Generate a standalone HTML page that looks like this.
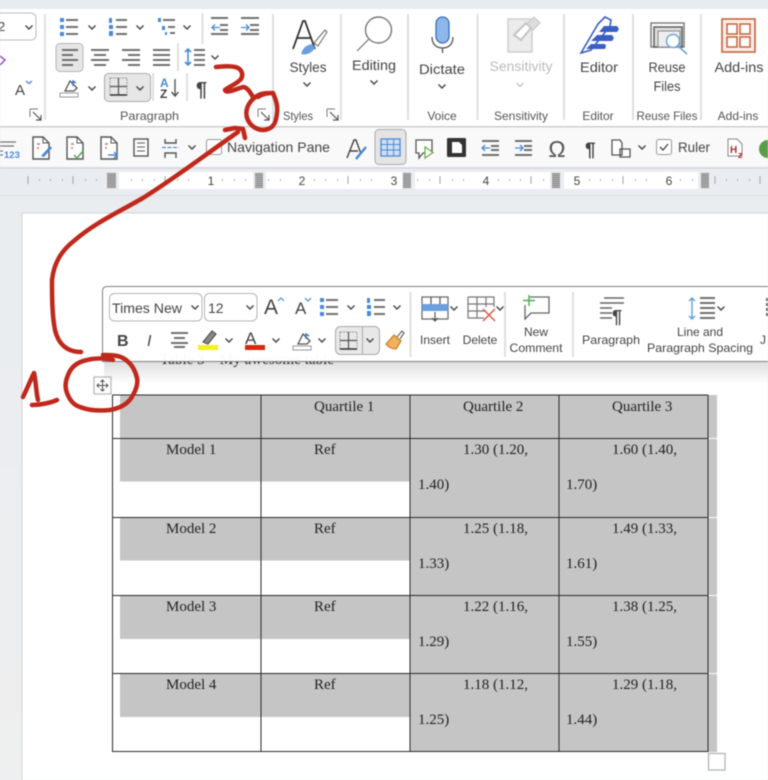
<!DOCTYPE html>
<html><head><meta charset="utf-8"><style>
html,body{margin:0;padding:0;background:#e8ecf0;width:768px;height:780px;overflow:hidden}
svg{display:block;filter:blur(.4px)}
text{font-family:"Liberation Sans",sans-serif;fill:#444}
.t{font-family:"Liberation Serif",serif;font-size:15px;fill:#222}
.g{font-size:12px;fill:#555}
.m{font-size:14px;text-anchor:middle;fill:#444}
.f{font-size:12px;text-anchor:middle;fill:#444}
.l{stroke:#707070;stroke-width:2;fill:none}
.b{fill:#4a8ad4}
.s{stroke:#e0e0e0;stroke-width:2}
.r{fill:none;stroke:#c0281c;stroke-width:4.500;stroke-linecap:round;stroke-linejoin:round}
</style></head><body>
<svg width="768" height="780" viewBox="0 0 768 780" xmlns="http://www.w3.org/2000/svg">
<defs>
<path id="ch" d="M-3.500-1.500 0 2 3.500-1.500" fill="none" stroke="#444" stroke-width="1.400"/>
<g id="launch"><path d="M-6-6H2M-6-6V2" stroke="#777" fill="none" stroke-width="1"/><path d="M-3-3 5 5M5 0V5H0" stroke="#555" fill="none" stroke-width="1.200"/></g>
<g id="bul"><rect x="0" y="0" width="4" height="4" class="b"/><rect x="0" y="7" width="4" height="4" class="b"/><rect x="0" y="14" width="4" height="4" class="b"/><path d="M6 2H18M6 9H18M6 16H18" class="l"/></g>
<g id="num"><rect x="0" y="0" width="3" height="5" class="b"/><rect x="0" y="7" width="4" height="4" class="b"/><rect x="0" y="13" width="4" height="5" class="b"/><path d="M7 2H18M7 9H18M7 16H18" class="l"/></g>
<g id="bord"><rect x="0" y="0" width="17" height="17" fill="none" stroke="#999" stroke-width="1" stroke-dasharray="2 1"/><path d="M8.500 0V17M0 8.500H17" stroke="#555" stroke-width="1.200"/><path d="M0 17H17" stroke="#333" stroke-width="1.400"/></g>
<g id="shade"><path d="M5 13 10 3l7 7-3 3H5z" fill="#fff" stroke="#555" stroke-width="1.300"/><path d="M13 8V3l3 2" stroke="#3a70c0" fill="none" stroke-width="1.400"/><rect x="0" y="15" width="18" height="4" fill="#fff" stroke="#999"/></g>
<g id="doc"><path d="M0 0H10L16 6V22H0z" fill="#fff" stroke="#555" stroke-width="1.400"/><path d="M10 0V6H16" fill="none" stroke="#555"/><path d="M4 7H7M4 11H6" stroke="#e06a6a" stroke-width="1.500"/></g>
<pattern id="hat" width="2" height="2" patternUnits="userSpaceOnUse"><rect width="2" height="2" fill="#8f8f8f"/><rect width="2" height="1" fill="#b0b0b0"/></pattern>
</defs>

<linearGradient id="bg" x1="0" y1="0" x2="0" y2="1"><stop offset="0" stop-color="#e7ecf0"/><stop offset="1" stop-color="#efefef"/></linearGradient>
<rect width="768" height="780" fill="url(#bg)"/>
<rect x="0" y="9" width="768" height="117" fill="#fff"/>
<rect x="0" y="126" width="768" height="1.500" fill="#cfcfcf"/>
<rect x="0" y="127.500" width="768" height="40" fill="#f9f9f9"/>
<rect x="0" y="167" width="768" height="2" fill="#d8dbde"/>
<rect x="0" y="169" width="768" height="26" fill="#e9edf1"/>
<rect x="0" y="195" width="768" height="1" fill="#dde0e3"/>

<path d="M0 13H30Q36 13 36 18V35Q36 40 30 40H0" fill="#fff" stroke="#bbb"/>
<text x="-2" y="31" style="font-size:13px">2</text>
<use href="#ch" x="29" y="27"/>
<path d="M0 56 5 60 0 65" fill="none" stroke="#9a4fc4" stroke-width="1.500"/>
<text x="15" y="95" style="font-size:15px">A</text><path d="M26 81l3 2.500 3-2.500" fill="none" stroke="#4a8ad4" stroke-width="1.300"/>
<use href="#launch" x="36" y="115"/>
<path d="M45 14V120M273 14V120M341 14V120M408 14V120M477.500 14V120M564 14V120M633 14V120M701 14V120" class="s"/>

<use href="#bul" x="60" y="18"/><use href="#ch" x="92" y="27"/>
<use href="#num" x="109" y="18"/><use href="#ch" x="140" y="27"/>
<rect x="158" y="18" width="3" height="4" class="b"/><rect x="162" y="26" width="3" height="4" class="b"/><rect x="165" y="32" width="2" height="3" class="b"/><path d="M163 20H175M168 27H175M170 33H175" class="l"/><use href="#ch" x="187" y="27"/>
<path d="M202.500 13V44" class="s"/>
<path d="M211 18H228M220 25H228M220 30H228M211 34H228" class="l"/><path d="M220 27.500H212M215 24.500 212 27.500 215 30.500" stroke="#4a8ad4" fill="none" stroke-width="1.300"/>
<path d="M241 18H259M250 25H259M250 30H259M241 34H259" class="l"/><path d="M241 27.500H249M246 24.500 249 27.500 246 30.500" stroke="#4a8ad4" fill="none" stroke-width="1.300"/>
<rect x="56" y="43.500" width="27" height="28" rx="4" fill="#e6e6e6" stroke="#b5b5b5"/>
<path d="M62 50H78M62 55H73M62 60H78M62 65H73" class="l"/>
<path d="M91 50H109M94 55H106M91 60H109M94 65H106" class="l"/>
<path d="M122 50H140M128 55H140M122 60H140M128 65H140" class="l"/>
<path d="M153 50H170M153 55H170M153 60H170M153 65H170" class="l"/>
<path d="M178 43V71" class="s"/>
<path d="M188 49V64M185 52l3-3 3 3M185 62l3 3 3-3" stroke="#4a8ad4" fill="none" stroke-width="1.600"/><path d="M194 50H205M194 55H205M194 60H205M194 65H205" class="l"/>
<use href="#ch" x="215" y="57"/>
<use href="#shade" x="60" y="78"/><use href="#ch" x="92" y="88"/>
<rect x="104.500" y="73.500" width="46" height="28" rx="4" fill="#e6e6e6" stroke="#aaa"/>
<use href="#bord" x="110" y="78"/><use href="#ch" x="140" y="88"/>
<path d="M153 73V101M187 73V101" class="s"/>
<text x="160" y="87" style="font-size:12px;fill:#4a8ad4;font-weight:bold">A</text><text x="160" y="98" style="font-size:12px;font-weight:bold">Z</text>
<path d="M175 79V96M171.500 92l3.500 4 3.500-4" stroke="#555" fill="none" stroke-width="1.400"/>
<text x="196" y="96" style="font-size:20px;font-weight:bold;fill:#444">¶</text>
<text x="120" y="120" class="g" textLength="59" lengthAdjust="spacingAndGlyphs">Paragraph</text>
<use href="#launch" x="264" y="115"/>
<text x="283" y="120" class="g" textLength="30" lengthAdjust="spacingAndGlyphs">Styles</text>
<use href="#launch" x="333" y="115"/>

<path d="M293 49 303 21h2l10 28M297 38h14" fill="none" stroke="#333" stroke-width="1.800"/>
<path d="M301 54c2-7 6-9 11-10l3 3c-1 4-7 9-14 7z" fill="#6a9fe0"/><path d="M314 43 325 30l2 2-9 14z" fill="#fff" stroke="#666"/>
<text x="308" y="72" class="m" textLength="37" lengthAdjust="spacingAndGlyphs">Styles</text><use href="#ch" x="307" y="84"/>
<circle cx="378.500" cy="30" r="13" fill="#fff" stroke="#777" stroke-width="1.400"/><path d="M369 39 357 51" stroke="#888" stroke-width="1.300"/>
<text x="374" y="70" class="m" textLength="44" lengthAdjust="spacingAndGlyphs">Editing</text><use href="#ch" x="374" y="82"/>
<rect x="436" y="17" width="13" height="26" rx="6.500" fill="#8db7e8" stroke="#3a70c0" stroke-width="1.300"/>
<path d="M432 37c0 8 5 11 10.500 11s10.500-3 10.500-11M442.500 48V53" fill="none" stroke="#555" stroke-width="1.300"/>
<text x="442" y="74" class="m" textLength="46" lengthAdjust="spacingAndGlyphs">Dictate</text><use href="#ch" x="442" y="86"/>
<rect x="508" y="19" width="24" height="33" fill="#ececec" stroke="#cfcfcf" stroke-width="1.500"/>
<path d="M514 35 526 23l5 5-10 12z" fill="#fff" stroke="#c4c4c4" stroke-width="2"/><path d="M527 24l7-7 6 6-7 7z" fill="#ddd" stroke="#c4c4c4"/>
<text x="521" y="71" class="m" style="fill:#bbb" textLength="63" lengthAdjust="spacingAndGlyphs">Sensitivity</text>
<path d="M516.500 83 520 86.500 523.500 83" fill="none" stroke="#bbb" stroke-width="1.200"/>
<path d="M581 53 598 24l7-7 6 3-1 6-19 24z" fill="#fff" stroke="#3a5fc4" stroke-width="1.600"/>
<path d="M604 26h13l2 3-2 3h-18zM597 35h15l2 3-2 3h-21zM591 44h14l1 2-1 3h-19z" fill="#3a5fc4"/>
<text x="599" y="72" class="m" textLength="38" lengthAdjust="spacingAndGlyphs">Editor</text>
<rect x="651" y="23" width="33" height="24" fill="#fff" stroke="#777" stroke-width="1.400"/><rect x="654" y="27" width="28" height="20" fill="#ddd" stroke="#555" stroke-width="1.400"/><rect x="658" y="31" width="22" height="16" fill="#eee" stroke="#888"/>
<circle cx="673" cy="41" r="6.500" fill="#fff" stroke="#6aa5dc" stroke-width="1.500"/><path d="M678 46 687 54" stroke="#6aa5dc" stroke-width="1.600"/>
<text x="667" y="72" class="m" textLength="37" lengthAdjust="spacingAndGlyphs">Reuse</text>
<text x="667" y="91" class="m" textLength="27" lengthAdjust="spacingAndGlyphs">Files</text>
<rect x="722" y="19" width="33" height="33" fill="#fbeee8" stroke="#c8623a" stroke-width="1.600"/>
<rect x="727" y="24" width="10" height="10" fill="#fff" stroke="#c8623a" stroke-width="1.500"/><rect x="740" y="24" width="10" height="10" fill="#fff" stroke="#c8623a" stroke-width="1.500"/><rect x="727" y="37" width="10" height="10" fill="#fff" stroke="#c8623a" stroke-width="1.500"/><rect x="740" y="37" width="10" height="10" fill="#fff" stroke="#c8623a" stroke-width="1.500"/>
<text x="739" y="72" class="m" textLength="49" lengthAdjust="spacingAndGlyphs">Add-ins</text>
<text x="442" y="120" class="g" text-anchor="middle">Voice</text>
<text x="521" y="120" class="g" text-anchor="middle" textLength="54" lengthAdjust="spacingAndGlyphs">Sensitivity</text>
<text x="598" y="120" class="g" text-anchor="middle">Editor</text>
<text x="667" y="120" class="g" text-anchor="middle" textLength="61" lengthAdjust="spacingAndGlyphs">Reuse Files</text>
<text x="738" y="120" class="g" text-anchor="middle">Add-ins</text>

<path d="M0 142H16M0 146H14M0 151H3M0 155H3" stroke="#777" stroke-width="1.200"/>
<text x="4" y="158" style="font-size:9.500px;font-weight:bold;fill:#4a8ad4">123</text>
<use href="#doc" x="33" y="137"/><path d="M41 156 50 146l2 2-8 9z" fill="#4a8ad4"/>
<use href="#doc" x="67" y="137"/><path d="M74 155l3 3 6-7" fill="none" stroke="#5aa85a" stroke-width="1.500"/>
<use href="#doc" x="101" y="137"/><path d="M108 155H117M114 152l3 3-3 3" fill="none" stroke="#4a8ad4" stroke-width="1.400"/>
<rect x="134" y="139" width="14" height="17" fill="#fff" stroke="#555" stroke-width="1.400"/><path d="M137 143H145M137 147H145M137 151H145" stroke="#777" stroke-width="1.200"/>
<path d="M162 147.500H179" stroke="#4a8ad4" stroke-width="1.300" stroke-dasharray="4 1.500"/><path d="M165 139V143H176V139M165 158V153H176V158" fill="none" stroke="#555" stroke-width="1.400"/>
<use href="#ch" x="192" y="147"/>
<rect x="206.500" y="139.500" width="15" height="15" rx="2" fill="#fff" stroke="#999"/>
<text x="227" y="152" style="font-size:14px" textLength="103" lengthAdjust="spacingAndGlyphs">Navigation Pane</text>
<path d="M347 158 354 140h2l5 14M350 151h8" fill="none" stroke="#444" stroke-width="1.400"/><path d="M356 159 366 147" stroke="#4a8ad4" stroke-width="2.500"/>
<rect x="375" y="129.500" width="31" height="35" rx="4" fill="#e4e4e4" stroke="#aaa"/>
<rect x="381" y="139" width="19" height="17" fill="#cfe0f5" stroke="#4a8ad4" stroke-width="1.300"/><path d="M387.300 139V156M393.600 139V156M381 144.500H400M381 150H400" stroke="#4a8ad4" stroke-width="1"/>
<path d="M416 140H432V153H423L419 158V153H416z" fill="#fff" stroke="#555" stroke-width="1.300"/><path d="M425 147V158L433 152.500z" fill="#fff" stroke="#6ab04a" stroke-width="1.300"/>
<rect x="447" y="138" width="19" height="19" rx="1" fill="#333"/><path d="M452 142H459L462 145V153H452z" fill="#fff"/>
<path d="M482 141H499M491 146H499M491 150H499M482 155H499" class="l"/><path d="M490 148H482M485 145 482 148 485 151" stroke="#4a8ad4" fill="none" stroke-width="1.300"/>
<path d="M515 141H532M524 146H532M524 150H532M515 155H532" class="l"/><path d="M515 148H523M520 145 523 148 520 151" stroke="#4a8ad4" fill="none" stroke-width="1.300"/>
<text x="557" y="157" style="font-size:23px;text-anchor:middle;fill:#555">Ω</text>
<text x="585" y="156" style="font-size:19px;font-weight:bold">¶</text>
<path d="M612 140H620L622 143V155H612zM620 149H630V157H620z" fill="#fff" stroke="#555" stroke-width="1.300"/>
<use href="#ch" x="642" y="147"/>
<rect x="656.500" y="139.500" width="15" height="15" rx="2" fill="#fff" stroke="#999"/><path d="M660 147l3 3 5-6" fill="none" stroke="#444" stroke-width="1.300"/>
<text x="678" y="152" style="font-size:14px" textLength="32" lengthAdjust="spacingAndGlyphs">Ruler</text>
<path d="M728 139H737L742 144V156H728z" fill="#fff" stroke="#888"/><text x="730" y="153" style="font-size:10px;fill:#b03030;font-weight:bold">H</text><text x="738" y="158" style="font-size:9px;fill:#b03030;font-weight:bold">z</text>
<circle cx="768" cy="149" r="9" fill="#5d9a4a"/>

<rect x="119" y="172" width="134" height="17" fill="#fff"/><rect x="266" y="172" width="136" height="17" fill="#fff"/><rect x="415" y="172" width="135" height="17" fill="#fff"/><rect x="564" y="172" width="134" height="17" fill="#fff"/>
<g fill="url(#hat)"><rect x="107" y="173" width="9" height="15"/><rect x="255" y="173" width="8" height="15"/><rect x="403" y="173" width="8" height="15"/><rect x="552" y="173" width="8" height="15"/><rect x="701" y="173" width="8" height="15"/></g>
<path d="M28 176V184M73 176V184M165 176V184M256 176V184M348 176V184M440 176V184M531 176V184M623 176V184M715 176V184M760 176V184" stroke="#aaa" stroke-width="1.100"/>
<path d="M39 180H40M50 180H51M62 180H63M85 180H86M96 180H97M131 180H132M142 180H143M154 180H155M177 180H178M188 180H189M222 180H223M234 180H235M245 180H246M268 180H269M280 180H281M314 180H315M325 180H326M337 180H338M360 180H361M371 180H372M417 180H418M429 180H430M452 180H453M463 180H464M498 180H499M509 180H510M520 180H521M543 180H544M589 180H590M600 180H601M612 180H613M635 180H636M646 180H647M680 180H681M692 180H693M726 180H727M737 180H738M749 180H750" stroke="#999" stroke-width="1.400"/>
<g style="font-size:12px" text-anchor="middle"><text x="211" y="185">1</text><text x="302" y="185">2</text><text x="394" y="185">3</text><text x="486" y="185">4</text><text x="577" y="185">5</text><text x="669" y="185">6</text></g>

<rect x="22" y="213" width="760" height="580" fill="#fff" stroke="#cfd2d4"/>

<g fill="#c5c5c5">
<rect x="120" y="395" width="290" height="43"/>
<rect x="120" y="438" width="290" height="43.500"/>
<rect x="120" y="517" width="290" height="43.500"/>
<rect x="120" y="596" width="290" height="43"/>
<rect x="120" y="674" width="290" height="43"/>
<rect x="410" y="395" width="307" height="357"/>
</g>
<path d="M112.500 395H708M112 438.500H708M112 517.500H708M112 595.500H708M112 673.500H708M112 751.500H708M112.500 395V752M261 395V752M410 395V752M559 395V752M708 395V752" stroke="#2a2a2a" stroke-width="1" fill="none"/>
<path d="M708.500 438.500H717M708.500 517.500H717M708.500 595.500H717M708.500 673.500H717" stroke="#fff" stroke-width="1"/>
<text class="t" x="314" y="411">Quartile 1</text><text class="t" x="463" y="411">Quartile 2</text><text class="t" x="612" y="411">Quartile 3</text>
<text class="t" x="166" y="454">Model 1</text><text class="t" x="314" y="454">Ref</text><text class="t" x="463" y="454">1.30 (1.20,</text><text class="t" x="612" y="454">1.60 (1.40,</text><text class="t" x="418" y="489">1.40)</text><text class="t" x="566" y="489">1.70)</text>
<text class="t" x="166" y="533">Model 2</text><text class="t" x="314" y="533">Ref</text><text class="t" x="463" y="533">1.25 (1.18,</text><text class="t" x="612" y="533">1.49 (1.33,</text><text class="t" x="418" y="568">1.33)</text><text class="t" x="566" y="568">1.61)</text>
<text class="t" x="166" y="611">Model 3</text><text class="t" x="314" y="611">Ref</text><text class="t" x="463" y="611">1.22 (1.16,</text><text class="t" x="612" y="611">1.38 (1.25,</text><text class="t" x="418" y="646">1.29)</text><text class="t" x="566" y="646">1.55)</text>
<text class="t" x="166" y="689">Model 4</text><text class="t" x="314" y="689">Ref</text><text class="t" x="463" y="689">1.18 (1.12,</text><text class="t" x="612" y="689">1.29 (1.18,</text><text class="t" x="418" y="724">1.25)</text><text class="t" x="566" y="724">1.44)</text>
<rect x="708.500" y="753.500" width="16.500" height="16.500" fill="#fff" stroke="#b5b5b5" stroke-width="1.300"/>
<rect x="94" y="377" width="17" height="17" fill="#fff" stroke="#bbb" stroke-width="1.300"/>
<path d="M102.500 380V391M97 385.500H108M100.500 382 102.500 380 104.500 382M100.500 389 102.500 391 104.500 389M99 383.500 97 385.500 99 387.500M106 383.500 108 385.500 106 387.500" fill="none" stroke="#555" stroke-width="1"/>
<text class="t" x="160" y="364" textLength="174" lengthAdjust="spacingAndGlyphs">Table 3 – My awesome table</text>

<linearGradient id="sh" x1="0" y1="0" x2="0" y2="1"><stop offset="0" stop-color="#000" stop-opacity=".13"/><stop offset="1" stop-color="#000" stop-opacity="0"/></linearGradient>
<rect x="104" y="361.500" width="664" height="22" fill="url(#sh)"/>
<path d="M770 286.500H107Q102.500 286.500 102.500 291V361.500H770z" fill="#fff" fill-opacity=".97" stroke="#808080"/>
<rect x="109.500" y="293.500" width="92.500" height="27.500" rx="5" fill="#fff" stroke="#b5b5b5"/>
<text x="112" y="313" style="font-size:14px" textLength="70" lengthAdjust="spacingAndGlyphs">Times New</text><use href="#ch" x="195" y="307"/>
<rect x="204.500" y="293.500" width="52.500" height="27.500" rx="5" fill="#fff" stroke="#b5b5b5"/>
<text x="208" y="313" style="font-size:14px">12</text><use href="#ch" x="250" y="307"/>
<text x="264" y="314" style="font-size:21px;fill:#444">A</text><path d="M278 301l3-3 3 3" fill="none" stroke="#4a8ad4" stroke-width="1.200"/>
<text x="295" y="314" style="font-size:17px;fill:#444">A</text><path d="M305 298l3 3 3-3" fill="none" stroke="#4a8ad4" stroke-width="1.200"/>
<use href="#bul" x="320" y="298"/><use href="#ch" x="351" y="307"/>
<use href="#num" x="367" y="298"/><use href="#ch" x="397" y="307"/>
<text x="117" y="346" style="font-size:16px;font-weight:bold">B</text>
<text x="147" y="346" style="font-size:16px;font-style:italic">I</text>
<path d="M171 333H188M174 338H185M171 343H188M174 347H185" class="l"/>
<path d="M203 342 212 331l4 3-8 10z" fill="#888" stroke="#555" stroke-width="1.200"/><rect x="198" y="345" width="20" height="5" fill="#f5ee20"/><use href="#ch" x="229" y="340"/>
<text x="245" y="344" style="font-size:17px">A</text><rect x="245" y="345" width="20" height="5" fill="#d42a10"/><use href="#ch" x="276" y="340"/>
<use href="#shade" x="293" y="331"/><use href="#ch" x="322" y="340"/>
<rect x="335.500" y="326.500" width="44" height="28" rx="5" fill="#e8e8e8" stroke="#aaa"/><path d="M362.500 327V354" stroke="#aaa"/>
<use href="#bord" x="340" y="332"/><use href="#ch" x="370" y="340"/>
<path d="M386 344 394 335l7 6-5 8c-4 0-8-2-10-5z" fill="#f0b060" stroke="#d08020" stroke-width="1.200"/><path d="M397 337 402 331l2 2-4 6" fill="#fff" stroke="#666" stroke-width="1.200"/>
<path d="M410.500 292V357M505 292V357M573 292V357" class="s"/>
<rect x="422" y="297" width="26" height="22" fill="#fff" stroke="#666" stroke-width="1.200"/><rect x="422" y="304" width="26" height="7" fill="#6a9fe0"/><path d="M431 297V304M440 297V304M435 312V321M432 318 435 321 438 318" stroke="#555" fill="none" stroke-width="1.200"/><use href="#ch" x="454" y="308"/>
<path d="M468 297H494V307M468 297V318H484M468 304H494M468 311H486M477 297V318M486 297V307" stroke="#777" fill="none" stroke-width="1.200"/><path d="M483 309 495 321M495 309 483 321" stroke="#e0584a" stroke-width="1.500"/><use href="#ch" x="500" y="308"/>
<text x="435" y="344" class="f">Insert</text><text x="480" y="344" class="f">Delete</text>
<path d="M530 297H549V313H531L525 319V305" fill="#fff" stroke="#666" stroke-width="1.300"/><path d="M529 295V306M523 300.500H535" stroke="#55aa55" stroke-width="1.500"/>
<text x="536" y="336" class="f">New</text><text x="536" y="352" class="f" textLength="53" lengthAdjust="spacingAndGlyphs">Comment</text>
<path d="M604 298H624M600 303H624M600 308H612M600 313H612M600 318H612" stroke="#666" stroke-width="1.500"/><text x="612" y="323" style="font-size:18px;font-weight:bold">¶</text>
<text x="611" y="344" class="f" textLength="58" lengthAdjust="spacingAndGlyphs">Paragraph</text>
<path d="M692 298V319M689 301l3-3 3 3M689 316l3 3 3-3" stroke="#5f9fdf" fill="none" stroke-width="1.400"/><path d="M700 298H715M700 303H715M700 308H715M700 313H715M700 318H715" class="l"/><use href="#ch" x="721" y="308"/>
<text x="700" y="336" class="f" textLength="46" lengthAdjust="spacingAndGlyphs">Line and</text>
<text x="700" y="352" class="f" textLength="106" lengthAdjust="spacingAndGlyphs">Paragraph Spacing</text>
<path d="M767 298V318" stroke="#666" stroke-width="2" stroke-dasharray="3 2"/>
<text x="763" y="344" class="f">J</text>

<path class="r" d="M81 352C66 352 58 343 55 330C52 315 52 295 52 280C54 262 62 250 75 240C95 223 115 214 143 198C175 178 205 155 238 132"/>
<path class="r" d="M225 130 235 128 243 129 245 138"/>
<path class="r" d="M216 67C224 66 231 66 235 67C241 68 244 74 241 79C237 84 228 87 225 90C226 94 236 89 243 87C247 87 250 92 253 97"/>
<path class="r" d="M258 97C262 94 268 93 273 93C276 100 278 106 277 113C276 122 274 127 268 129C261 132 253 128 249 122C245 116 246 109 249 104C252 99 256 96 261 94C265 93 270 93 273 93"/>
<path class="r" d="M113 360C105 358 95 358 87 360C77 362 71 367 68 375C65 382 65 388 67 393C70 401 74 405 80 407C90 411 100 411 110 410C122 408 129 403 133 395C137 388 138 383 137 378C135 369 130 362 123 358C117 355 110 355 103 355"/>
<path class="r" d="M23 397C27 389 30 381 34 373C36 381 36 392 38 400M32 405C40 405 50 403 57 400"/>
</svg>
</body></html>
